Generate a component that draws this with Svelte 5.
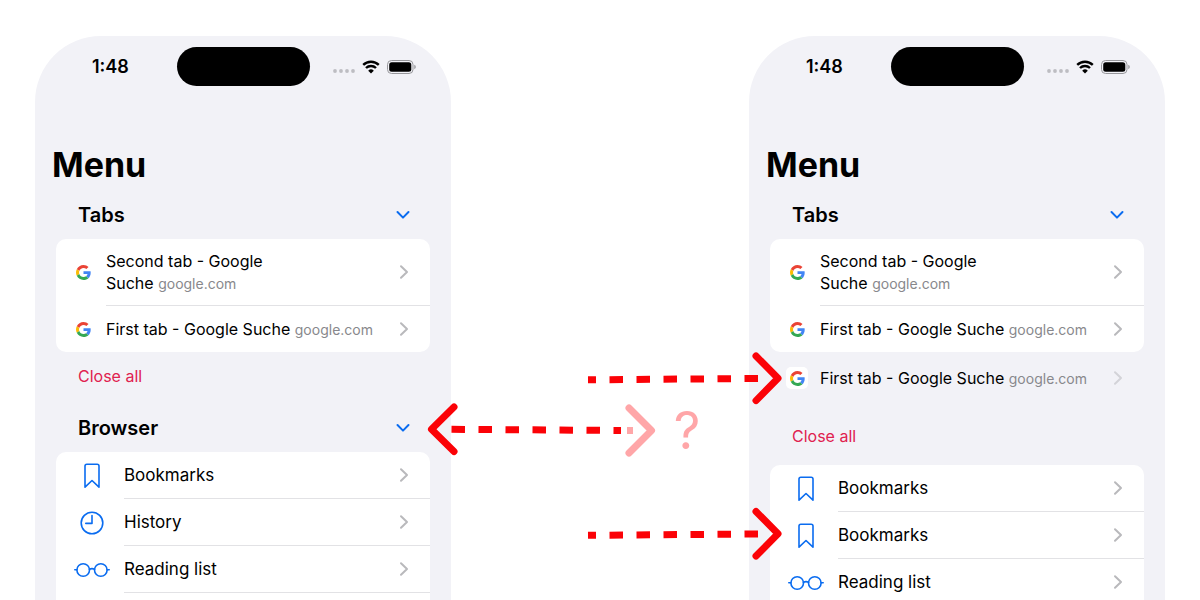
<script lang="ts">
  type Tab = { title: string; host: string };
  type Item = { icon: 'bookmark' | 'clock' | 'glasses'; label: string };

  const tabs: Tab[] = [
    { title: 'Second tab - Google Suche', host: 'google.com' },
    { title: 'First tab - Google Suche', host: 'google.com' },
  ];

  const before: Item[] = [
    { icon: 'bookmark', label: 'Bookmarks' },
    { icon: 'clock', label: 'History' },
    { icon: 'glasses', label: 'Reading list' },
  ];

  const after: Item[] = [
    { icon: 'bookmark', label: 'Bookmarks' },
    { icon: 'bookmark', label: 'Bookmarks' },
    { icon: 'glasses', label: 'Reading list' },
  ];
</script>

{#snippet google()}
  <svg class="google" viewBox="0 0 48 48" aria-hidden="true">
    <path fill="#ea4335" d="M24 9.5c3.54 0 6.71 1.22 9.21 3.6l6.85-6.85C35.9 2.38 30.47 0 24 0 14.62 0 6.51 5.38 2.56 13.22l7.98 6.19C12.43 13.72 17.74 9.5 24 9.5z" />
    <path fill="#4285f4" d="M46.98 24.55c0-1.57-.15-3.09-.38-4.55H24v9.02h12.94c-.58 2.96-2.26 5.48-4.78 7.18l7.73 6c4.51-4.18 7.09-10.36 7.09-17.65z" />
    <path fill="#fbbc05" d="M10.53 28.59c-.48-1.45-.76-2.99-.76-4.59s.27-3.14.76-4.59l-7.98-6.19C.92 16.46 0 20.12 0 24s.92 7.54 2.56 10.78l7.97-6.19z" />
    <path fill="#34a853" d="M24 48c6.48 0 11.93-2.13 15.89-5.81l-7.73-6c-2.15 1.45-4.92 2.3-8.16 2.3-6.26 0-11.57-4.22-13.47-9.91l-7.98 6.19C6.51 42.62 14.62 48 24 48z" />
  </svg>
{/snippet}

{#snippet chevron()}
  <svg class="chevron" viewBox="0 0 10 16" aria-hidden="true">
    <path d="M2 2.2 8 8l-6 5.8" />
  </svg>
{/snippet}

{#snippet heading(title: string)}
  <div class="section-head">
    <h2>{title}</h2>
    <button class="toggle" aria-label="Collapse {title}">
      <svg viewBox="0 0 14 10" aria-hidden="true"><path d="M1.5 2 7 7.6 12.5 2" /></svg>
    </button>
  </div>
{/snippet}

{#snippet tabRow(tab: Tab)}
  <a class="row tab" href="#tab">
    <span class="favicon">{@render google()}</span>
    <span class="body">
      <span class="tab-text">{tab.title} <small>{tab.host}</small></span>
      {@render chevron()}
    </span>
  </a>
{/snippet}

{#snippet itemIcon(icon: Item['icon'])}
  <svg class="item-icon" viewBox="0 0 36 26" aria-hidden="true">
    {#if icon === 'bookmark'}
      <path d="M11 24.2V3a1.8 1.8 0 0 1 1.8-1.8h10.4A1.8 1.8 0 0 1 25 3v21.2l-7-6.7z" />
    {:else if icon === 'clock'}
      <circle cx="18" cy="13" r="10.8" />
      <path d="M18 5.5V13.4H11.8" />
    {:else}
      <circle cx="9.2" cy="13" r="6.3" />
      <circle cx="26.8" cy="13" r="6.3" />
      <path d="M15.4 12.4q2.6-1.6 5.2 0M.8 12.8h2.1M33.1 12.8h2.1" />
    {/if}
  </svg>
{/snippet}

{#snippet itemList(items: Item[])}
  <nav class="card items">
    {#each items as item}
      <a class="row item" href="#item">
        {@render itemIcon(item.icon)}
        <span class="body">
          <span>{item.label}</span>
          {@render chevron()}
        </span>
      </a>
    {/each}
  </nav>
{/snippet}

{#snippet phoneTop()}
  <div class="status">
    <time>1:48</time>
    <div class="island"></div>
    <div class="signals">
      <svg class="dots" viewBox="0 0 22 4" aria-hidden="true">
        <circle cx="2" cy="2" r="1.9" /><circle cx="8" cy="2" r="1.9" />
        <circle cx="14" cy="2" r="1.9" /><circle cx="20" cy="2" r="1.9" />
      </svg>
      <svg class="wifi" viewBox="0 0 18 14" aria-hidden="true">
        <path d="M1.2 4.9a11.2 11.2 0 0 1 15.6 0M4 8a7.2 7.2 0 0 1 10 0" />
        <path class="wifi-base" d="M9 13.6 6.2 10.7a4 4 0 0 1 5.6 0z" />
      </svg>
      <svg class="battery" viewBox="0 0 30 14" aria-hidden="true">
        <rect class="shell" x=".5" y=".5" width="25.5" height="13" rx="4" />
        <rect x="2.2" y="2.2" width="22.1" height="9.6" rx="2.5" />
        <path class="nub" d="M27.3 4.8v4.4q1.5-.6 1.5-2.2t-1.5-2.2z" />
      </svg>
    </div>
  </div>
  <h1>Menu</h1>
  {@render heading('Tabs')}
  <div class="card">
    {#each tabs as tab}
      {@render tabRow(tab)}
    {/each}
  </div>
{/snippet}

<main>
  <section class="phone">
    {@render phoneTop()}
    <button class="close-all">Close all</button>
    {@render heading('Browser')}
    {@render itemList(before)}
  </section>

  <svg class="arrows" viewBox="0 0 298 600" aria-hidden="true">
    <g class="arrow">
      <path class="dash" d="M307 378.5 137 379.8" />
      <path class="head" d="M305 356 327 378.3 305 400.6" />
    </g>
    <g class="arrow">
      <path class="dash" d="M.5 429.3 170 430.5" />
      <path class="head" d="M3 407-19.5 429.2 3 451.5" />
    </g>
    <g class="arrow faint">
      <path class="dash" d="M176 430.5h6" />
      <path class="head" d="M178 408 200.5 430.5 178 453" />
    </g>
    <text x="236" y="449" text-anchor="middle">?</text>
    <g class="arrow">
      <path class="dash" d="M307 534 137 535.3" />
      <path class="head" d="M305 511.5 327 533.8 305 556" />
    </g>
  </svg>

  <section class="phone after">
    {@render phoneTop()}
    <div class="stray">{@render tabRow(tabs[1])}</div>
    <button class="close-all">Close all</button>
    {@render itemList(after)}
  </section>
</main>

<style>
  :global(body) {
    margin: 0;
    background: #fff;
  }

  main {
    display: grid;
    grid-template-columns: minmax(0, 1fr) 298px minmax(0, 1fr);
    height: 100vh;
    overflow: hidden;
    padding: 0 35px;
    box-sizing: border-box;
    font-family: Inter, "Liberation Sans", sans-serif;
    color: #000;
  }

  .phone {
    display: flex;
    flex-direction: column;
    box-sizing: border-box;
    margin-top: 36px;
    padding: 11px 21px 0;
    border-radius: 66px 66px 0 0;
    background: #f2f2f7;
  }

  h1,
  h2 {
    margin: 0;
  }

  button {
    padding: 0;
    border: 0;
    background: none;
    font: inherit;
    cursor: pointer;
  }

  /* status bar */
  .status {
    display: grid;
    grid-template-columns: 1fr 133px 1fr;
    align-items: center;
    height: 39px;
  }
  time {
    padding-left: 36px;
    font-size: 18px;
    font-weight: 600;
  }
  .island {
    height: 39px;
    border-radius: 20px;
    background: #000;
  }
  .signals {
    display: flex;
    align-items: center;
    justify-content: flex-end;
    gap: 7px;
    padding-right: 13px;
  }
  .dots {
    width: 22px;
    height: 4px;
    margin-top: 9px;
    fill: #bdbdc2;
  }
  .wifi {
    width: 18px;
    height: 14px;
    fill: none;
    stroke: #000;
    stroke-width: 2.4;
  }
  .wifi-base {
    fill: #000;
    stroke: none;
  }
  .battery {
    width: 30px;
    height: 14px;
  }
  .shell {
    fill: none;
    stroke: #97979b;
  }
  .nub {
    fill: #97979b;
  }

  h1 {
    margin: 57px 0 4px -4px;
    font-size: 34px;
    line-height: 44px;
    font-weight: 700;
  }

  .section-head {
    display: flex;
    align-items: center;
    justify-content: space-between;
    height: 48px;
    padding: 0 20px 0 22px;
  }
  h2 {
    font-size: 20px;
    line-height: 24px;
    font-weight: 600;
  }
  .toggle {
    display: flex;
  }
  .toggle svg {
    width: 14px;
    height: 10px;
    fill: none;
    stroke: #0a6cf0;
    stroke-width: 2;
    stroke-linecap: round;
    stroke-linejoin: round;
  }

  /* lists */
  .card {
    border-radius: 10px;
    background: #fff;
  }
  .row {
    display: flex;
    align-items: stretch;
    color: inherit;
    text-decoration: none;
    font-size: 16px;
    line-height: 22px;
  }
  .body {
    flex: 1;
    display: flex;
    align-items: center;
    justify-content: space-between;
    box-sizing: border-box;
    padding-right: 21px;
  }
  .item .body,
  .tab:not(:last-child) .body {
    border-bottom: 1px solid #e2e2e5;
  }
  .tab .body {
    min-height: 46px;
    padding-top: 11px;
    padding-bottom: 11px;
  }
  .tab-text {
    max-width: 272px;
    text-wrap: pretty;
  }
  small {
    color: #88888c;
    font-size: 14px;
    line-height: 14px;
    white-space: nowrap;
  }
  .favicon {
    display: grid;
    place-items: center;
    align-self: center;
    width: 22px;
    height: 22px;
    margin: 0 12px 0 16px;
    border-radius: 5px;
    background: #fff;
  }
  .google {
    width: 15px;
    height: 15px;
  }
  .chevron {
    flex: none;
    width: 10px;
    height: 16px;
    fill: none;
    stroke: #b9b9bc;
    stroke-width: 2;
    stroke-linecap: round;
    stroke-linejoin: round;
  }
  .items {
    padding-bottom: 24px;
    border-radius: 10px 10px 0 0;
  }
  .item {
    font-size: 17px;
  }
  .item .body {
    min-height: 47px;
  }
  .item-icon {
    align-self: center;
    width: 36px;
    height: 26px;
    margin: 0 14px 0 18px;
    fill: none;
    stroke: #0a6cf0;
    stroke-width: 1.6;
    stroke-linejoin: round;
    stroke-linecap: round;
  }

  .close-all {
    align-self: flex-start;
    margin: 14px 22px 18px;
    color: #e0214f;
    font-size: 16px;
    line-height: 20px;
  }

  .stray {
    padding-top: 3px;
  }
  .stray .chevron {
    stroke: #d3d3d8;
  }
  .after .close-all {
    margin: 25px 22px 19px;
  }

  /* arrows pointing at the broken rows reach over both phones */
  .arrows {
    position: relative;
    width: 298px;
    height: 600px;
    overflow: visible;
    pointer-events: none;
  }
  .arrow {
    fill: none;
    stroke: #fb0207;
    stroke-width: 7;
  }
  .dash {
    stroke-dasharray: 13.5;
  }
  .head {
    stroke-linecap: round;
    stroke-linejoin: round;
  }
  .faint {
    stroke: #ffa6a8;
  }
  text {
    fill: #ffa6a8;
    font-size: 52px;
    font-weight: 400;
  }
</style>
